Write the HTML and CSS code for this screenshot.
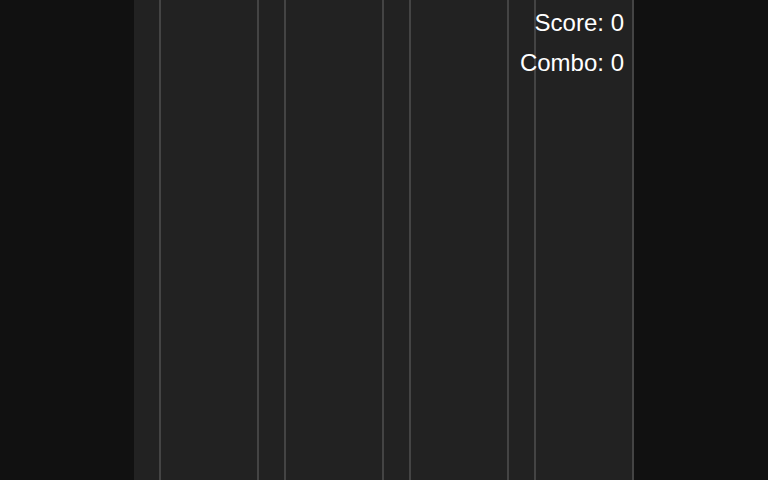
FILE: index.html
```html
<!DOCTYPE html>
<html>
<head>
<meta charset="utf-8">
<link rel="stylesheet" href="styles.css">
</head>
<body>
<div class="game">
  <div class="lanes">
    <div class="lane"></div>
    <div class="lane"></div>
    <div class="lane"></div>
    <div class="lane"></div>
  </div>
  <div class="hud">
    <div class="hud-line">Score: 0</div>
    <div class="hud-line">Combo: 0</div>
  </div>
</div>
</body>
</html>
```
FILE: styles.css
```css
html, body {
  margin: 0;
  padding: 0;
  height: 100%;
  background: #111;
  font-family: "Liberation Sans", Arial, sans-serif;
  overflow: hidden;
}
.game {
  position: relative;
  width: 500px;
  height: 100%;
  margin: 0 auto;
  background: #222;
}
.lanes {
  display: flex;
  justify-content: flex-end;
  gap: 25px;
  height: 100%;
}
.lane {
  box-sizing: border-box;
  width: 100px;
  height: 100%;
  border-left: 2px solid #444;
  border-right: 2px solid #444;
}
.hud {
  position: absolute;
  top: 3px;
  right: 10px;
  text-align: right;
  color: #fff;
  font-size: 24px;
  line-height: 40px;
}
```
